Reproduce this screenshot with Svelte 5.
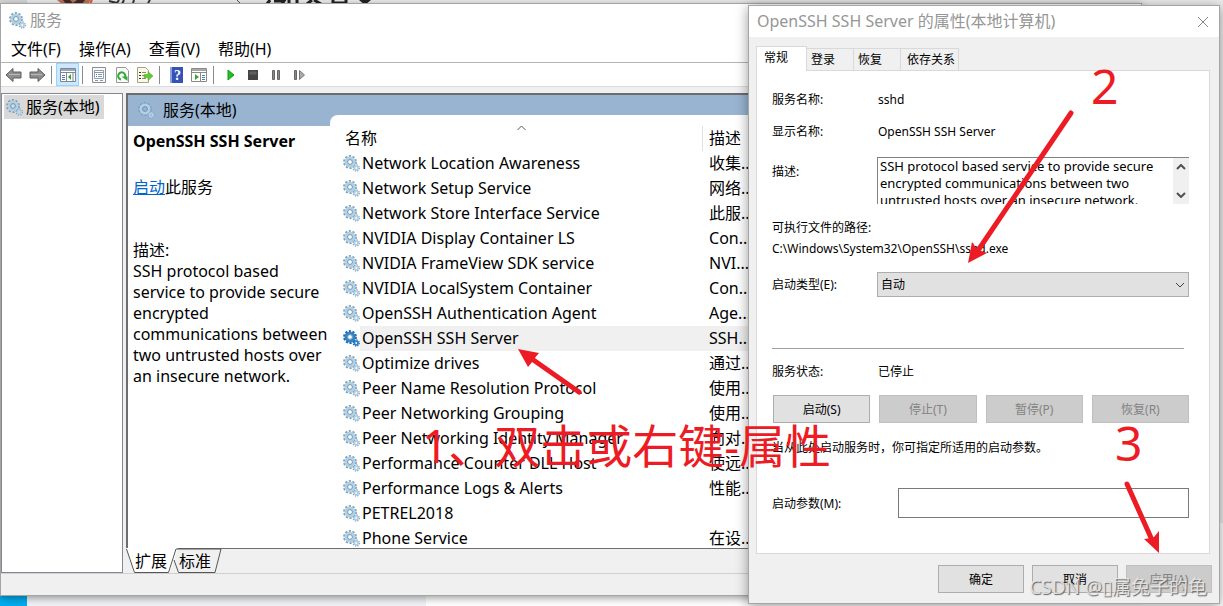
<script lang="ts">
	type Service = { name: string; description: string; selected?: boolean }

	const menus = ['文件(F)', '操作(A)', '查看(V)', '帮助(H)']

	const services: Service[] = [
		{ name: 'Network Location Awareness', description: '收集...' },
		{ name: 'Network Setup Service', description: '网络...' },
		{ name: 'Network Store Interface Service', description: '此服...' },
		{ name: 'NVIDIA Display Container LS', description: 'Con...' },
		{ name: 'NVIDIA FrameView SDK service', description: 'NVI...' },
		{ name: 'NVIDIA LocalSystem Container', description: 'Con...' },
		{ name: 'OpenSSH Authentication Agent', description: 'Age...' },
		{ name: 'OpenSSH SSH Server', description: 'SSH...', selected: true },
		{ name: 'Optimize drives', description: '通过...' },
		{ name: 'Peer Name Resolution Protocol', description: '使用...' },
		{ name: 'Peer Networking Grouping', description: '使用...' },
		{ name: 'Peer Networking Identity Manager', description: '向对...' },
		{ name: 'Performance Counter DLL Host', description: '使远...' },
		{ name: 'Performance Logs & Alerts', description: '性能...' },
		{ name: 'PETREL2018', description: '' },
		{ name: 'Phone Service', description: '在设...' }
	]

	const tabs = ['常规', '登录', '恢复', '依存关系']

	const description =
		'SSH protocol based service to provide secure encrypted communications between two untrusted hosts over an insecure network.'

	let startupType = $state('自动')
	let parameters = $state('')
</script>

{#snippet gear(active: boolean)}
	<svg class="gear" class:active width="17" height="17" viewBox="0 0 17 17" aria-hidden="true">
		<circle class="teeth" cx="7" cy="7" r="5.8" stroke-width="2.2" stroke-dasharray="2.1 1.54" />
		<circle class="ring" cx="7" cy="7" r="4" stroke-width="3" />
		<circle class="edge" cx="7" cy="7" r="2.4" />
		<circle class="teeth" cx="13.2" cy="13" r="3" stroke-width="1.4" stroke-dasharray="1.2 1.15" />
		<circle class="ring" cx="13.2" cy="13" r="1.8" stroke-width="1.8" />
	</svg>
{/snippet}

<div class="desktop">
	<svg class="backdrop" width="400" height="5" aria-hidden="true">
		<path d="M57 0h34l-3 4H62z" fill="#bc7358" />
		<path d="M63 0h7l3 3 4-3h8l-3 4H66z" fill="#402a28" />
		<path d="M92 0l-2 4" stroke="#f0533a" stroke-width="2" />
		<path d="M109 1l8 2 2-3M124 0l-2 4M134 0l-1 3M150 0l-2 3" stroke="#333" stroke-width="2" fill="none" />
		<path d="M237 0l4 4" stroke="#555" fill="none" />
		<path d="M270 0l-3 4M274 1h10l-2 3M289 0v4M297 0v4M312 0l-5 4M314 0l7 4M333 0v3h13V0" stroke="#222" stroke-width="3" fill="none" />
		<path d="M359 0h12l-6 5z" fill="#222" />
	</svg>

	<main class="window services">
		<header class="titlebar">
			{@render gear(false)}
			<span>服务</span>
		</header>
		<nav class="menubar">
			{#each menus as menu}
				<button type="button">{menu}</button>
			{/each}
		</nav>
		<div class="toolbar">
			<button type="button" aria-label="后退">
				<svg width="18" height="16" viewBox="0 0 18 16"><path d="M1 8l7-6.500V5h8v6H8v3.500z" fill="#8e8e8e" stroke="#5e5e5e" /><path d="M4 7.500h11" stroke="#b9b9b9" /></svg>
			</button>
			<button type="button" aria-label="前进">
				<svg width="18" height="16" viewBox="0 0 18 16"><path d="M17 8l-7-6.500V5H2v6h8v3.500z" fill="#8e8e8e" stroke="#5e5e5e" /><path d="M3 7.500h11" stroke="#b9b9b9" /></svg>
			</button>
			<i></i>
			<button type="button" class="pressed" aria-label="显示控制台树">
				<svg width="18" height="16" viewBox="0 0 18 16"><path d="M1.500 1.500h15v13h-15z" fill="#fff" stroke="#7d8793" /><path d="M2 3h14" stroke="#9aa5b2" stroke-width="2" /><path d="M2 5.500h14M7.500 6v8M14 6v8" stroke="#7d8793" /><path d="M3 8.500h3M3 10.500h3M3 12.500h3" stroke="#4c79b4" /><path d="M12 7v6L9 10z" fill="#35a82f" /></svg>
			</button>
			<i></i>
			<button type="button" aria-label="属性">
				<svg width="18" height="16" viewBox="0 0 18 16"><path d="M2.500 .5h13v15h-13z" fill="#fafafa" stroke="#8d8d8d" /><path d="M4.500 3.500h9v8h-9z" fill="#fff" stroke="#8aa1b8" /><path d="M5 5.500h8M8 7.500h4M8 9.500h4M5 13.500h3M10 13.500h3" stroke="#8a97a5" /><path d="M6 7.500h1M6 9.500h1" stroke="#3a76c0" /></svg>
			</button>
			<button type="button" aria-label="刷新">
				<svg width="18" height="16" viewBox="0 0 18 16"><path d="M3.500 .5h9l3 3v12h-12z" fill="#fbfbfb" stroke="#999" /><path d="M8 12.500a3.600 3.600 0 1 1 4-2" fill="none" stroke="#2fab35" stroke-width="2" /><path d="M8.500 9.500h6v4.500z" fill="#2fab35" /></svg>
			</button>
			<button type="button" aria-label="导出列表">
				<svg width="18" height="16" viewBox="0 0 18 16"><path d="M1.500 .5h8l3 3v12h-11z" fill="#fcf8e4" stroke="#a7a088" /><path d="M3 5.500h2M3 8.500h2M3 11.500h2" stroke="#333" /><path d="M6 5.500h4M6 8.500h3M6 11.500h4" stroke="#888" /><path d="M8 7.500h4v-3l5 4.500-5 4.500v-3H8z" fill="#64c936" stroke="#4aa722" stroke-width=".5" /></svg>
			</button>
			<i></i>
			<button type="button" aria-label="帮助">
				<svg width="18" height="16" viewBox="0 0 18 16"><path d="M3 0h13v16H3z" fill="#3553b5" /><path d="M3 0h2v16H3z" fill="#8ca2dc" /><text x="7" y="13" font-size="14" font-weight="700" fill="#fff">?</text></svg>
			</button>
			<button type="button" aria-label="显示操作窗格">
				<svg width="18" height="16" viewBox="0 0 18 16"><path d="M1.500 1.500h15v13h-15z" fill="#fff" stroke="#8a8a8a" /><path d="M2 3h14" stroke="#a7a7a7" stroke-width="2" /><path d="M2 5.500h14M10.500 6v8" stroke="#8a8a8a" /><path d="M12 8.500h3M12 10.500h3M12 12.500h3" stroke="#4c79b4" /><path d="M5 7v6l4-3z" fill="#35a82f" /></svg>
			</button>
			<i></i>
			<button type="button" aria-label="启动服务">
				<svg width="18" height="16" viewBox="0 0 18 16"><path d="M7 3l6 5-6 5z" fill="#1fc31f" stroke="#159a15" /></svg>
			</button>
			<button type="button" aria-label="停止服务">
				<svg width="18" height="16" viewBox="0 0 18 16"><path d="M4 3h10v10H4z" fill="#444" /><path d="M5.500 4.500h7v3h-7z" fill="#606060" /></svg>
			</button>
			<button type="button" aria-label="暂停服务">
				<svg width="18" height="16" viewBox="0 0 18 16"><path d="M5.500 3.500h2v9h-2zM10.500 3.500h2v9h-2z" fill="#888" stroke="#666" /></svg>
			</button>
			<button type="button" aria-label="重新启动服务">
				<svg width="18" height="16" viewBox="0 0 18 16"><path d="M4.500 3.500h2v9h-2z" fill="#888" stroke="#666" /><path d="M9.500 3.500l5 4.500-5 4.500z" fill="#aaa" stroke="#777" /></svg>
			</button>
		</div>

		<div class="workspace">
			<aside class="tree">
				<button type="button">
					{@render gear(false)}
					<span>服务(本地)</span>
				</button>
			</aside>
			<section class="pane">
				<div class="split">
					<div class="details">
						<div class="caption">
							{@render gear(false)}
							<span>服务(本地)</span>
						</div>
						<h1>OpenSSH SSH Server</h1>
						<p class="action"><a href="#start">启动</a>此服务</p>
						<p>描述:</p>
						<p>{description}</p>
					</div>
					<div class="list">
						<svg class="sort" width="9" height="6" viewBox="0 0 9 6" aria-hidden="true">
							<path d="M.5 5l4-4 4 4" fill="none" stroke="#555" />
						</svg>
						<table>
							<colgroup>
								<col class="icon-col" />
								<col class="name-col" />
								<col />
							</colgroup>
							<thead>
								<tr>
									<th colspan="2">名称</th>
									<th>描述</th>
								</tr>
							</thead>
							<tbody>
								{#each services as service}
									<tr class:selected={service.selected}>
										<td class="icon">{@render gear(!!service.selected)}</td>
										<td>{service.name}</td>
										<td>{service.description}</td>
									</tr>
								{/each}
							</tbody>
						</table>
					</div>
				</div>
				<div class="views">
					<svg class="outline" width="96" height="25" viewBox="0 0 96 25" aria-hidden="true">
						<path d="M0 0h52l-8 24H8z" fill="#fff" />
						<path d="M.5 1l8 23.500h34L50 1h45l-6 23.500H52.500L48 12" fill="none" stroke="#555" />
					</svg>
					<button type="button">扩展</button>
					<button type="button">标准</button>
				</div>
			</section>
		</div>
		<footer class="status"></footer>
	</main>

	<section class="window dialog">
		<header class="titlebar">
			<span>OpenSSH SSH Server 的属性(本地计算机)</span>
			<button type="button" aria-label="关闭">
				<svg width="12" height="12" viewBox="0 0 12 12"><path d="M1 1l10 10M11 1L1 11" stroke="#888" /></svg>
			</button>
		</header>
		<div class="tabs">
			{#each tabs as tab, index}
				<button type="button" class:current={index === 0}>{tab}</button>
			{/each}
		</div>
		<form class="sheet">
			<div class="field">
				<span>服务名称:</span>
				<span>sshd</span>
			</div>
			<div class="field">
				<span>显示名称:</span>
				<span>OpenSSH SSH Server</span>
			</div>
			<div class="field about">
				<label for="description">描述:</label>
				<div class="memo">
					<textarea id="description" readonly value={description}></textarea>
					<div class="scrollbar">
						<svg width="10" height="6" viewBox="0 0 10 6"><path d="M1 5l4-4 4 4" fill="none" stroke="#505050" stroke-width="2" /></svg>
						<svg width="10" height="6" viewBox="0 0 10 6"><path d="M1 1l4 4 4-4" fill="none" stroke="#505050" stroke-width="2" /></svg>
					</div>
				</div>
			</div>
			<div class="path">
				<span>可执行文件的路径:</span>
				<span>C:\Windows\System32\OpenSSH\sshd.exe</span>
			</div>
			<div class="field">
				<label for="startup">启动类型(E):</label>
				<div class="dropdown">
					<select id="startup" bind:value={startupType}>
						<option>自动</option>
						<option>手动</option>
						<option>禁用</option>
					</select>
					<svg width="10" height="6" viewBox="0 0 10 6" aria-hidden="true"><path d="M1 1l4 4 4-4" fill="none" stroke="#444" /></svg>
				</div>
			</div>
			<hr />
			<div class="field">
				<span>服务状态:</span>
				<span>已停止</span>
			</div>
			<div class="controls">
				<button type="button">启动(S)</button>
				<button type="button" disabled>停止(T)</button>
				<button type="button" disabled>暂停(P)</button>
				<button type="button" disabled>恢复(R)</button>
			</div>
			<p>当从此处启动服务时，你可指定所适用的启动参数。</p>
			<div class="field wide">
				<label for="parameters">启动参数(M):</label>
				<input id="parameters" type="text" bind:value={parameters} />
			</div>
		</form>
		<footer class="actions">
			<button type="button">确定</button>
			<button type="button">取消</button>
			<button type="button" disabled>应用(A)</button>
		</footer>
	</section>

	<svg class="notes" width="1223" height="606" viewBox="0 0 1223 606">
		<g stroke="#ed1c24" stroke-linecap="round" stroke-width="5">
			<path d="M579 392L532 359" />
			<path d="M1071 113L979 249" />
			<path d="M1127 484L1152 540" />
		</g>
		<g fill="#ed1c24">
			<path d="M518 349l21 4-5 6-1 2-5 6z" />
			<path d="M968 263l4-21 5 7 2 1 8 3z" />
			<path d="M1159 553l-15-14 8-1 2-1 5-6z" />
			<text x="422" y="463" font-size="46">1、双击或右键-属性</text>
			<text x="1091" y="104" font-size="48">2</text>
			<text x="1115" y="461" font-size="48">3</text>
		</g>
	</svg>
	<span class="watermark">CSDN @▯属兔子的龟</span>
</div>

<style>
	:global(body) {
		margin: 0;
	}

	.desktop {
		position: relative;
		height: 100vh;
		overflow: hidden;
		background: linear-gradient(90deg, #00adef 27px, #f1f2f5 27px, #f1f2f5 426px, #fff 426px);
		color: #000;
		font: 16px/21px 'Noto Sans', 'Noto Sans CJK SC', sans-serif;
	}

	.desktop::before {
		content: '';
		position: absolute;
		inset: 0 0 83px;
		background: linear-gradient(90deg, #d8d8d8 27px, #ededed 27px);
	}

	button,
	input,
	select,
	textarea {
		margin: 0;
		border: 0;
		padding: 0;
		background: none;
		color: inherit;
		font: inherit;
	}

	h1,
	p {
		margin: 0;
		font-size: inherit;
	}

	svg {
		display: block;
		flex: none;
	}

	.backdrop {
		position: absolute;
		top: 0;
		left: 0;
	}

	.gear circle {
		fill: none;
	}

	.gear .teeth {
		stroke: #7f9fb9;
	}

	.gear .ring {
		stroke: #b0d0e5;
	}

	.gear .edge {
		stroke: #6f93ae;
	}

	.gear.active .teeth {
		stroke: #1b69ad;
	}

	.gear.active .ring {
		stroke: #2f83c6;
	}

	.window {
		position: absolute;
		display: flex;
		flex-direction: column;
		box-sizing: border-box;
		border: 1px solid #a5a5a5;
		background: #f0f0f0;
	}

	.titlebar {
		display: flex;
		align-items: center;
		height: 31px;
		background: #fff;
		color: #969696;
	}

	.services {
		inset: 3px 81px 10px 0;
		box-shadow: 0 2px 8px rgb(0 0 0 / 40%);
	}

	.services .titlebar {
		gap: 4px;
		height: 32px;
		padding-left: 8px;
	}

	.menubar {
		display: flex;
		gap: 18px;
		height: 26px;
		padding-left: 10px;
		border-bottom: 1px solid #b4b4b4;
		background: #fff;
	}

	.toolbar {
		display: flex;
		align-items: center;
		height: 23px;
		padding-left: 1px;
		border-bottom: 1px solid #dcdcdc;
		background: #fff;
	}

	.toolbar button {
		display: grid;
		place-items: center;
		width: 23px;
		height: 23px;
	}

	.toolbar .pressed {
		box-sizing: border-box;
		border: 1px solid #99d1ff;
		background: #cce8ff;
	}

	.toolbar i {
		width: 1px;
		height: 18px;
		margin: 0 4px 0 3px;
		background: #8a8a8a;
	}

	.toolbar text {
		font-family: 'Liberation Serif', serif;
	}

	.workspace {
		display: flex;
		flex: 1;
		gap: 3px;
		min-height: 0;
		padding-top: 6px;
	}

	.tree {
		box-sizing: border-box;
		width: 122px;
		border: 1px solid #828790;
		background: #fff;
	}

	.tree button {
		display: flex;
		align-items: center;
		gap: 3px;
		height: 24px;
		margin: 1px 2px;
		padding: 0 4px 0 2px;
		background: #d9d9d9;
	}

	.pane {
		display: flex;
		flex: 1;
		flex-direction: column;
		min-width: 0;
	}

	.split {
		display: flex;
		flex: 1;
		min-height: 0;
		border-top: 2px solid #6d6d6d;
		border-left: 2px solid #6d6d6d;
		background: #99b4d1;
	}

	.details {
		box-sizing: border-box;
		width: 202px;
		padding-left: 5px;
		background: #fff;
	}

	.caption {
		display: flex;
		align-items: center;
		gap: 8px;
		height: 31px;
		margin: 0 0 5px -5px;
		padding-left: 10px;
		background: #99b4d1;
	}

	.details h1 {
		margin-bottom: 25px;
	}

	.action {
		margin-bottom: 42px;
	}

	a {
		color: #0066cc;
	}

	.list {
		position: relative;
		flex: 1;
		min-width: 0;
		margin-top: 20px;
		overflow: hidden;
		border-top-left-radius: 8px;
		background: #fff;
	}

	.sort {
		position: absolute;
		top: 10px;
		left: 187px;
	}

	table {
		width: 100%;
		margin-top: 11px;
		padding-left: 13px;
		border-spacing: 0;
		table-layout: fixed;
	}

	.icon-col {
		width: 17px;
	}

	.name-col {
		width: 342px;
	}

	tr {
		height: 25px;
	}

	th,
	td {
		padding: 0 0 0 2px;
		overflow: hidden;
		font-weight: 400;
		line-height: 25px;
		text-align: left;
		white-space: nowrap;
	}

	td:last-child {
		padding-left: 7px;
	}

	th:last-child {
		padding-left: 6px;
		border-left: 1px solid #dfdfdf;
	}

	td.icon {
		padding: 0;
	}

	.selected td:not(.icon) {
		background: #f0f0f0;
	}

	.views {
		position: relative;
		display: flex;
		gap: 12px;
		height: 24px;
		padding-left: 9px;
		border-top: 1px solid #6d6d6d;
	}

	.views button {
		position: relative;
	}

	.outline {
		position: absolute;
		top: -1px;
		left: 0;
	}

	.status {
		height: 21px;
		border-top: 1px solid #d0d0d0;
	}

	.dialog {
		top: 5px;
		left: 748px;
		width: 472px;
		padding-bottom: 10px;
		box-shadow: 0 2px 12px rgb(0 0 0 / 40%);
		font-size: 12px;
		line-height: 17px;
	}

	.dialog .titlebar {
		justify-content: space-between;
		padding: 0 10px 0 8px;
		font-size: 16px;
	}

	.tabs {
		display: flex;
		align-items: flex-end;
		margin: 9px 0 0 7px;
	}

	.tabs button {
		height: 22px;
		padding: 0 18px 0 4px;
		border: 1px solid #d9d9d9;
		border-width: 1px 1px 0 0;
	}

	.tabs .current {
		z-index: 1;
		height: 25px;
		margin-bottom: -1px;
		padding: 0 18px 3px 7px;
		border-left-width: 1px;
		background: #fff;
	}

	.tabs button:last-child {
		padding: 0 3px 0 6px;
	}

	.sheet {
		display: flex;
		flex-direction: column;
		margin: 0 9px 0 7px;
		padding: 20px 20px 35px 15px;
		border: 1px solid #d9d9d9;
		background: #fff;
	}

	.field {
		display: grid;
		grid-template-columns: 106px 1fr;
		align-items: center;
		margin-bottom: 15px;
	}

	.about {
		align-items: start;
		margin-top: 2px;
	}

	.about label {
		margin-top: 6px;
	}

	.memo {
		display: flex;
		height: 46px;
		margin-left: -1px;
		border: solid #828282;
		border-width: 1px 0 0 1px;
	}

	.memo textarea {
		flex: 1;
		min-width: 0;
		padding-left: 2px;
		overflow: hidden;
		font-size: 13px;
		resize: none;
	}

	.scrollbar {
		display: flex;
		flex-direction: column;
		align-items: center;
		justify-content: space-between;
		width: 16px;
		padding: 6px 0;
		box-sizing: border-box;
		background: #f0f0f0;
	}

	.path {
		display: grid;
		gap: 4px;
		margin-bottom: 15px;
	}

	.dropdown {
		position: relative;
		margin-left: -1px;
	}

	.dropdown select {
		width: 100%;
		height: 25px;
		padding-left: 3px;
		border: 1px solid #adadad;
		background: #e1e1e1;
		appearance: none;
	}

	.dropdown svg {
		position: absolute;
		top: 10px;
		right: 4px;
	}

	hr {
		align-self: stretch;
		margin: 36px 5px 14px 0;
		border: 0;
		border-top: 1px solid #a0a0a0;
	}

	.controls {
		display: grid;
		grid-template-columns: repeat(4, 1fr);
		gap: 9px;
		margin-bottom: 16px;
		padding-left: 1px;
	}

	.controls button,
	.actions button {
		height: 28px;
		border: 1px solid #adadad;
		background: #e1e1e1;
	}

	.controls button:disabled,
	.actions button:disabled {
		border-color: #bfbfbf;
		background: #ccc;
		color: #838383;
	}

	.wide {
		grid-template-columns: 126px 1fr;
		margin: 32px 0 0;
	}

	.wide input {
		box-sizing: border-box;
		width: 100%;
		height: 30px;
		padding: 0 4px;
		border: 1px solid #7a7a7a;
	}

	.actions {
		display: flex;
		justify-content: flex-end;
		gap: 8px;
		margin: 11px 7px 0 0;
	}

	.actions button {
		width: 86px;
	}

	.notes {
		position: absolute;
		top: 0;
		left: 0;
		pointer-events: none;
	}

	.watermark {
		position: absolute;
		right: 16px;
		bottom: 6px;
		color: rgb(235 235 235 / 85%);
		font-size: 19px;
		line-height: 26px;
		text-shadow: 1px 1px 1px #666;
		white-space: nowrap;
	}
</style>
